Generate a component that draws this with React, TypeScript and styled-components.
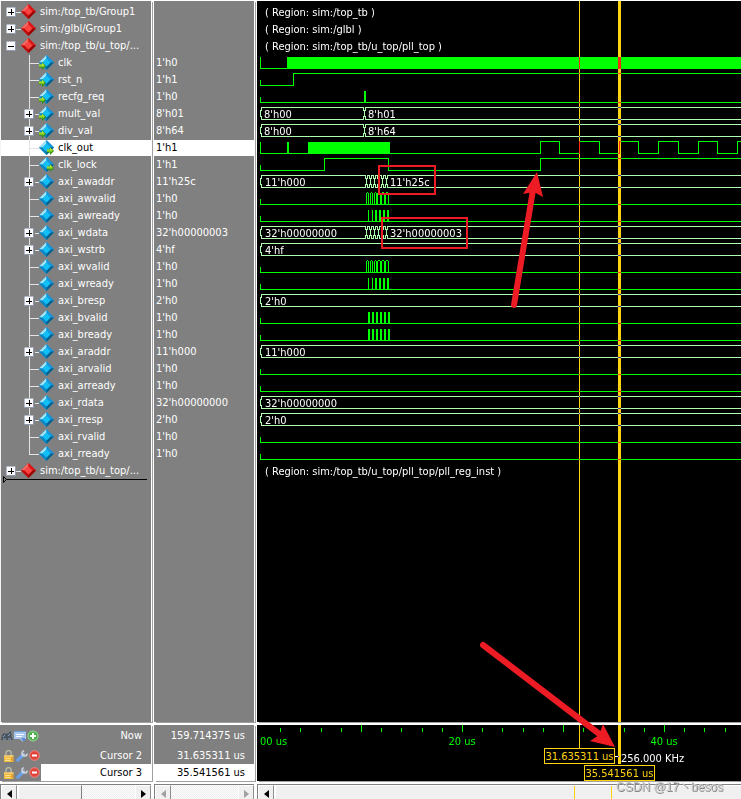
import React from "react";
import styled, { createGlobalStyle, css } from "styled-components";

const GRAY = "#808080";
const GREEN = "#00ff00";
const PALE = "#b0ffb0";
const YELLOW = "#ffd40e";
const RED = "#ed1c24";
const FAR = 4000;
const ROW = 17;

const GlobalStyle = createGlobalStyle`
  *, *::before, *::after { box-sizing: border-box; }
  html, body { margin: 0; padding: 0; background: #fff; }
  body {
    font-family: "DejaVu Sans Condensed", "DejaVu Sans", "Noto Sans", sans-serif;
    font-size: 11px;
    line-height: 17px;
    color: #fff;
  }
  button { font: inherit; color: inherit; border: 0; padding: 0; background: none; }
  svg { display: block; flex: none; }
`;

/* ---------- layout ---------- */

const Window = styled.main`
  position: relative;
  display: grid;
  grid-template-columns: 151px 100px minmax(0, 1fr);
  grid-template-rows: 1fr auto 15px;
  gap: 3px;
  min-height: 100vh;
  padding-top: 1px;
  overflow: hidden;
  background: #fff;
`;

const panelEdge = css`
  box-shadow: 1px 0 0 #fff, 2px 1px 0 #a0a0a0;
`;

const Panel = styled.section<{ $inset?: boolean }>`
  ${panelEdge}
  background: ${GRAY};
  padding-top: 3px;
  border-left: ${(p) => (p.$inset ? "1px solid #f4f4f4" : "0")};
  min-width: 0;
`;

const WavePanel = styled.section`
  ${panelEdge}
  position: relative;
  isolation: isolate;
  background: #000;
  padding-top: 3px;
  min-width: 0;
  overflow: hidden;
`;

const TreeList = styled.ul`
  list-style: none;
  margin: 0;
  padding: 0;
`;

const TreeRow = styled.li<{ $child?: boolean; $selected?: boolean }>`
  display: flex;
  height: ${ROW}px;
  padding-left: ${(p) => (p.$child ? 23 : 5)}px;
  white-space: nowrap;
  background: ${(p) => (p.$selected ? "#fff" : "transparent")};
  color: ${(p) => (p.$selected ? "#000" : "#fff")};
  border-bottom: 1px solid ${(p) => (p.$selected ? GRAY : "transparent")};
`;

const Toggle = styled.button`
  display: block;
  width: 10px;
  height: ${ROW}px;
  flex: none;
`;

const RowName = styled.span`
  line-height: 15px;
  padding-left: 4px;
`;

const ValueRow = styled.li<{ $selected?: boolean }>`
  height: ${ROW}px;
  line-height: 15px;
  padding-left: 2px;
  background: ${(p) => (p.$selected ? "#fff" : "transparent")};
  color: ${(p) => (p.$selected ? "#000" : "#fff")};
  border-bottom: 1px solid ${(p) => (p.$selected ? GRAY : "transparent")};
`;

const DropLine = styled.svg`
  width: 146px;
  height: 8px;
  margin-top: -4px;
`;

const WaveRow = styled.svg`
  width: 100%;
  height: ${ROW}px;
  overflow: hidden;
`;

const CursorLine = styled.span<{ $x: number; $width: number; $height?: string }>`
  position: absolute;
  top: 0;
  left: ${(p) => p.$x}px;
  width: ${(p) => p.$width}px;
  height: ${(p) => p.$height ?? "100%"};
  background: ${YELLOW};
  mix-blend-mode: difference;
`;

/* ---------- cursor strip ---------- */

const Footer = styled.div`
  ${panelEdge}
  background: ${GRAY};
  min-width: 0;
`;

const FooterRow = styled.div<{ $tall?: boolean; $active?: boolean }>`
  display: flex;
  height: ${(p) => (p.$tall ? 22 : 17)}px;
  line-height: ${(p) => (p.$tall ? 22 : 17)}px;
  color: ${(p) => (p.$active ? "#000" : "#fff")};
`;

const IconBar = styled.div<{ $indent: number }>`
  display: flex;
  align-items: center;
  gap: 1px;
  width: 41px;
  padding-left: ${(p) => p.$indent}px;
`;

const IconButton = styled.button`
  display: block;
  flex: none;
  width: 12px;
  height: 12px;
`;

const FooterText = styled.span<{ $active?: boolean }>`
  flex: 1;
  padding-right: 9px;
  text-align: right;
  white-space: nowrap;
  background: ${(p) => (p.$active ? "#fff" : "transparent")};
`;

const Ruler = styled.section`
  ${panelEdge}
  position: relative;
  isolation: isolate;
  background: #000;
  overflow: hidden;
`;

const CursorTag = styled.span<{ $x: number; $y: number }>`
  position: absolute;
  left: ${(p) => p.$x}px;
  top: ${(p) => p.$y}px;
  width: 71px;
  height: 16px;
  line-height: 15px;
  text-align: center;
  white-space: nowrap;
  color: ${YELLOW};
  background: #000;
  border: 1px solid ${YELLOW};
`;

const Frequency = styled.span`
  position: absolute;
  left: 364px;
  top: 25px;
  white-space: nowrap;
`;

/* ---------- scroll bars ---------- */

const ScrollBar = styled.div<{ $bare?: boolean }>`
  display: flex;
  min-width: 0;
  overflow: hidden;
  border-top: 1px solid #808080;
  border-left: 1px solid #808080;
  background: ${(p) =>
    p.$bare ? "#f0f0f0" : "repeating-conic-gradient(#fff 0 25%, #ececec 0 50%) 0 0 / 2px 2px"};
`;

const ScrollButton = styled.button<{ $disabled?: boolean }>`
  display: flex;
  align-items: center;
  justify-content: center;
  flex: none;
  width: 16px;
  height: 17px;
  background: #f0f0f0;
  color: ${(p) => (p.$disabled ? "#a0a0a0" : "#000")};
  border-top: 1px solid #fff;
  border-left: 1px solid #fff;
  border-right: 1px solid #909090;
`;

const Thumb = styled.div<{ $width?: number }>`
  position: relative;
  height: 17px;
  flex: ${(p) => (p.$width ? "none" : "1")};
  width: ${(p) => (p.$width ? `${p.$width}px` : "auto")};
  background: #f0f0f0;
  border-top: 1px solid #fff;
  border-left: 2px solid #fff;
  border-right: ${(p) => (p.$width ? "1px solid #808080" : "0")};
`;

const Spacer = styled.div`
  flex: 1;
`;

const ThumbMark = styled.span<{ $x: number }>`
  position: absolute;
  top: 0;
  bottom: 0;
  left: ${(p) => p.$x}px;
  width: 1px;
  background: ${YELLOW};
`;

/* ---------- overlay ---------- */

const Notes = styled.svg`
  position: absolute;
  inset: 0;
  width: 100%;
  height: 100%;
  pointer-events: none;
`;

const Watermark = styled.span`
  position: absolute;
  right: 18px;
  bottom: 3px;
  font-family: "Liberation Sans", "Noto Sans CJK SC", sans-serif;
  font-size: 12px;
  line-height: 18px;
  color: #c9c9c9;
  text-shadow: 1px 1px 0 #8a8a8a;
  white-space: nowrap;
  pointer-events: none;
`;

/* ---------- data ---------- */

type Dir = "in" | "out" | "none";
type Cell = { at: number; text?: string; textX?: number };
type Wave =
  | { kind: "region"; text: string }
  | { kind: "bit"; tall?: boolean; edges?: number[]; fills?: [number, number][]; extra?: string }
  | { kind: "bus"; cells: Cell[] };
type Signal = {
  name: string;
  value?: string;
  dir?: Dir;
  expand?: "+" | "-";
  selected?: boolean;
  wave: Wave;
};

const flat: Wave = { kind: "bit" };
const bus = (text: string, textX = 8): Wave => ({ kind: "bus", cells: [{ at: 3, text, textX }] });
const burst = (a: string, b: string): Wave => ({
  kind: "bus",
  cells: [
    { at: 3, text: a, textX: 8 },
    ...[109, 113, 117, 121, 125].map((at) => ({ at })),
    { at: 129, text: b, textX: 133 },
  ],
});
const validWave: Wave = {
  kind: "bit",
  fills: [[109, 1], [111, 1], [113, 1], [115, 1], [117, 1], [119, 2], [123, 2], [127, 2], [131, 1]],
  extra: "M110 1.5h1M114 1.5h1M118 1.5h1M121 1.5h2M125 1.5h2M129 1.5h2",
};
const readyWave: Wave = {
  kind: "bit",
  fills: [[111, 1], [115, 1], [118, 2], [122, 2], [126, 2], [130, 2]],
};
const respWave: Wave = {
  kind: "bit",
  fills: [[111, 2], [115, 2], [119, 2], [123, 2], [127, 2], [131, 2]],
};

const signals: Signal[] = [
  { name: "sim:/top_tb/Group1", expand: "+", wave: { kind: "region", text: "( Region: sim:/top_tb )" } },
  { name: "sim:/glbl/Group1", expand: "+", wave: { kind: "region", text: "( Region: sim:/glbl )" } },
  { name: "sim:/top_tb/u_top/...", expand: "-", wave: { kind: "region", text: "( Region: sim:/top_tb/u_top/pll_top )" } },
  { name: "clk", value: "1'h0", dir: "in", wave: { kind: "bit", tall: true, fills: [[30, FAR]] } },
  { name: "rst_n", value: "1'h1", dir: "in", wave: { kind: "bit", edges: [36] } },
  { name: "recfg_req", value: "1'h0", dir: "in", wave: { kind: "bit", fills: [[107, 2]] } },
  { name: "mult_val", value: "8'h01", dir: "in", expand: "+", wave: { kind: "bus", cells: [{ at: 3, text: "8'h00", textX: 7 }, { at: 107, text: "8'h01", textX: 111 }] } },
  { name: "div_val", value: "8'h64", dir: "in", expand: "+", wave: { kind: "bus", cells: [{ at: 3, text: "8'h00", textX: 7 }, { at: 107, text: "8'h64", textX: 111 }] } },
  { name: "clk_out", value: "1'h1", dir: "out", selected: true, wave: { kind: "bit", tall: true, fills: [[30, 2], [51, 82]], edges: [283, 302, 322, 342, 362, 381, 401, 421, 441, 460, 480, 500, 520, 539, 559] } },
  { name: "clk_lock", value: "1'h1", dir: "out", wave: { kind: "bit", edges: [67, 131, 283] } },
  { name: "axi_awaddr", value: "11'h25c", expand: "+", wave: burst("11'h000", "11'h25c") },
  { name: "axi_awvalid", value: "1'h0", wave: validWave },
  { name: "axi_awready", value: "1'h0", wave: readyWave },
  { name: "axi_wdata", value: "32'h00000003", expand: "+", wave: burst("32'h00000000", "32'h00000003") },
  { name: "axi_wstrb", value: "4'hf", expand: "+", wave: bus("4'hf") },
  { name: "axi_wvalid", value: "1'h0", wave: validWave },
  { name: "axi_wready", value: "1'h0", wave: readyWave },
  { name: "axi_bresp", value: "2'h0", expand: "+", wave: bus("2'h0") },
  { name: "axi_bvalid", value: "1'h0", wave: respWave },
  { name: "axi_bready", value: "1'h0", wave: respWave },
  { name: "axi_araddr", value: "11'h000", expand: "+", wave: bus("11'h000") },
  { name: "axi_arvalid", value: "1'h0", wave: flat },
  { name: "axi_arready", value: "1'h0", wave: flat },
  { name: "axi_rdata", value: "32'h00000000", expand: "+", wave: bus("32'h00000000") },
  { name: "axi_rresp", value: "2'h0", expand: "+", wave: bus("2'h0") },
  { name: "axi_rvalid", value: "1'h0", wave: flat },
  { name: "axi_rready", value: "1'h0", wave: flat },
  { name: "sim:/top_tb/u_top/...", expand: "+", wave: { kind: "region", text: "( Region: sim:/top_tb/u_top/pll_top/pll_reg_inst )" } },
];

const lastChild = signals.length - 2;

/* ---------- icons ---------- */

const RedDiamond = () => (
  <svg width="15" height="17" viewBox="0 0 15 17">
    <path d="M7.5 0L15 7.5L7.5 15L0 7.5Z" fill="#d01212" />
    <path d="M7.5 0L0 7.5H3.5L7.5 3.5Z" fill="#f46a62" />
    <path d="M7.5 0L15 7.5H11.5L7.5 3.5Z" fill="#d81818" />
    <path d="M0 7.5L7.5 15V11.5L3.5 7.5Z" fill="#c00c0c" />
    <path d="M15 7.5L7.5 15V11.5L11.5 7.5Z" fill="#960606" />
    <path d="M7.5 3.5L11.5 7.5L7.5 11.5L3.5 7.5Z" fill="#fb4340" />
  </svg>
);

const BlueDiamond = ({ dir }: { dir?: Dir }) => (
  <svg width="15" height="17" viewBox="0 0 15 17">
    <path d="M7.5 0L15 7.5L7.5 15L0 7.5Z" fill="#0a8fd0" />
    <path d="M7.5 0L0 7.5H3.5L7.5 3.5Z" fill="#a4e6fa" />
    <path d="M7.5 0L15 7.5H11.5L7.5 3.5Z" fill="#1696dc" />
    <path d="M0 7.5L7.5 15V11.5L3.5 7.5Z" fill="#0c86c4" />
    <path d="M15 7.5L7.5 15V11.5L11.5 7.5Z" fill="#06608c" />
    <path d="M7.5 3.5L11.5 7.5L7.5 11.5L3.5 7.5Z" fill="#12c0f8" />
    {(dir === "in" || dir === "out") && (
      <g transform={dir === "in" ? "translate(0 7)" : "translate(8 7)"}>
        <path d="M0 2.5H3V0L7 4L3 8V5.5H0Z" fill="#2c8a10" />
        <path d="M0 2.5H3V0.8L6 3.8H0Z" fill="#c4f23c" />
        <path d="M0 3.8H6L3.6 6V4.8H0Z" fill="#7fd41c" />
      </g>
    )}
  </svg>
);

const ToggleIcon = ({ sign }: { sign: "+" | "-" }) => (
  <svg width="10" height="17" viewBox="0 0 10 17">
    <rect x="0.5" y="3.5" width="9" height="9" rx="1" fill="#fbfbfd" stroke="#b4bccb" />
    <path d="M1 12.5h8.5V4" fill="none" stroke="#8f98ac" />
    <path d={sign === "+" ? "M2 8h6M5 5v6" : "M2 8h6"} stroke="#000" shapeRendering="crispEdges" />
  </svg>
);

const Branch = ({ expanded, last }: { expanded?: boolean; last?: boolean }) => (
  <svg width="11" height="17" viewBox="0 0 11 17" shapeRendering="crispEdges">
    <path d={`M5.5 0V${last ? 9 : 17}${expanded ? "" : "M6 8.5H11"}`} fill="none" stroke="#e4e4e4" />
  </svg>
);

const Link = styled.span<{ $w: number }>`
  flex: none;
  width: ${(p) => p.$w}px;
  height: 1px;
  margin-top: 8px;
  background: #e4e4e4;
`;

const Gap = styled.span`
  flex: none;
  width: 5px;
`;

const StackedToggle = styled.span`
  position: relative;
  display: flex;
  flex: none;
  width: 11px;
  height: ${ROW}px;

  ${Toggle} {
    position: absolute;
    left: 0;
    top: 0;
  }
`;

const AddIcon = () => (
  <svg width="12" height="12" viewBox="0 0 12 12">
    <circle cx="6" cy="6" r="5" fill="#4cae4c" stroke="#9bdc98" />
    <path d="M6 3v6M3 6h6" stroke="#fff" strokeWidth="2" />
  </svg>
);
const RemoveIcon = () => (
  <svg width="12" height="12" viewBox="0 0 12 12">
    <circle cx="5.500" cy="5.500" r="4.800" fill="#e2443c" stroke="#f08a80" />
    <path d="M3 5.500h5" stroke="#fff" strokeWidth="2" />
  </svg>
);
const WrenchIcon = () => (
  <svg width="12" height="12" viewBox="0 0 12 12">
    <path d="M1.8 10.2L6.5 5.5" stroke="#6aa0ea" strokeWidth="3.2" strokeLinecap="round" />
    <path d="M6 6L8.5 3.6" stroke="#b8cbe4" strokeWidth="2" />
    <path d="M8.2 0.8A2.6 2.6 0 1 0 11.2 3.6" fill="none" stroke="#c9d2de" strokeWidth="1.6" />
  </svg>
);
const LockIcon = () => (
  <svg width="12" height="12" viewBox="0 0 12 12">
    <path d="M3 5V3.2A2.6 2.6 0 0 1 8.2 3.2V6" fill="none" stroke="#b9b9a8" strokeWidth="1.4" />
    <rect x="1" y="5.5" width="9.5" height="6.5" fill="#f2b83c" />
    <path d="M1 6h9.5M2 8.5h6M2 10.5h6" stroke="#ffe08a" />
    <path d="M9 7v4" stroke="#d88c1a" />
  </svg>
);
const BinocularsIcon = () => (
  <svg width="12" height="12" viewBox="0 0 12 12">
    <path d="M0 10L1 5L3 3L5 4L6 3L7 4L9 1L10 2L11 8L12 10Z" fill="#4a5560" />
    <path d="M2 7L4 5M7 6L9 4M2 9h3M7 9h3" stroke="#8fa2b8" />
  </svg>
);
const NoteIcon = () => (
  <svg width="12" height="12" viewBox="0 0 12 12">
    <path d="M0 1H12V9H9V12L6 9H0Z" fill="#a9c6ee" />
    <path d="M0 1.5H12" stroke="#6f9ddc" />
    <path d="M2 4.5h8M2 6.5h6" stroke="#f4f8ff" />
    <path d="M7 8h4v3H9Z" fill="#5b8bd0" />
  </svg>
);
const ArrowGlyph = ({ right }: { right?: boolean }) => (
  <svg width="5" height="8" viewBox="0 0 5 8">
    <path d={right ? "M0 0L5 4L0 8Z" : "M5 0L0 4L5 8Z"} fill="currentColor" />
  </svg>
);

/* ---------- wave forms ---------- */

function bitPath(edges: number[], fills: [number, number][], tall?: boolean) {
  const endless = fills.find(([, w]) => w === FAR);
  const end = endless ? endless[0] : FAR;
  let d = `M3.5 ${tall ? 2 : 8}V13.5`;
  let high = false;
  edges.forEach((x) => {
    d += high ? `H${x + 0.5}V13.5` : `H${x + 0.5}V1.5`;
    high = !high;
  });
  return `${d}H${end}`;
}

function cellPath(a: number, b: number) {
  const l = a + 0.5;
  const r = b + 0.5;
  return `M${l + 1} 1.5H${r - 1}V4L${r} 5V10L${r - 1} 11V13.5H${l + 1}V11L${l} 10V5L${l + 1} 4Z`;
}

const WaveView = ({ wave, label }: { wave: Wave; label: string }) => (
  <WaveRow role="img" aria-label={label}>
    {wave.kind === "region" && (
      <text x="8" y="12" fill="#fff">
        {wave.text}
      </text>
    )}
    {wave.kind === "bit" && (
      <g shapeRendering="crispEdges">
        <path d={bitPath(wave.edges ?? [], wave.fills ?? [], wave.tall) + (wave.extra ?? "")} fill="none" stroke={GREEN} />
        {(wave.fills ?? []).map(([x, w]) => (
          <rect key={x} x={x} y="2" width={w} height="12" fill={GREEN} />
        ))}
      </g>
    )}
    {wave.kind === "bus" &&
      wave.cells.map((c, i) => (
        <g key={c.at}>
          <path d={cellPath(c.at, wave.cells[i + 1]?.at ?? FAR)} fill="none" stroke={PALE} shapeRendering="crispEdges" />
          {c.text && (
            <text x={c.textX} y="12" fill="#fff">
              {c.text}
            </text>
          )}
        </g>
      ))}
  </WaveRow>
);

const RulerScale = () => {
  const ticks = Array.from({ length: 150 }, (_, i) => i + 1);
  return (
    <Notes aria-hidden="true">
      {ticks.map((i) => (
        <rect
          key={i}
          x={Math.round(3 + 20.2 * i)}
          y={i % 5 ? 3 : 0}
          width="1"
          height={i % 5 ? 4 : 7}
          fill={GREEN}
          shapeRendering="crispEdges"
        />
      ))}
      <text x="3" y="20" fill={GREEN}>00 us</text>
      <text x="205" y="20" fill={GREEN} textAnchor="middle">20 us</text>
      <text x="407" y="20" fill={GREEN} textAnchor="middle">40 us</text>
      <path d="M358 31.5h4" stroke="#fff" shapeRendering="crispEdges" />
    </Notes>
  );
};

const cursorRows = [
  { name: "Cursor 2", value: "31.635311 us", active: false },
  { name: "Cursor 3", value: "35.541561 us", active: true },
];

export default function App() {
  return (
    <>
      <GlobalStyle />
      <Window>
        <Panel $inset aria-label="Signals">
          <TreeList>
            {signals.map((s, i) => {
              const child = s.value !== undefined;
              return (
                <TreeRow key={i} $child={child} $selected={s.selected}>
                  {child ? (
                    <>
                      <StackedToggle>
                        <Branch expanded={!!s.expand} last={i === lastChild} />
                        {s.expand && (
                          <Toggle aria-label={`Expand ${s.name}`}>
                            <ToggleIcon sign={s.expand} />
                          </Toggle>
                        )}
                      </StackedToggle>
                      <Link $w={4} />
                      <BlueDiamond dir={s.dir} />
                    </>
                  ) : (
                    <>
                      <Toggle aria-label={`Toggle ${s.name}`}>
                        <ToggleIcon sign={s.expand ?? "+"} />
                      </Toggle>
                      {s.expand === "+" ? <Link $w={5} /> : <Gap />}
                      <RedDiamond />
                    </>
                  )}
                  <RowName>{s.name}</RowName>
                </TreeRow>
              );
            })}
          </TreeList>
          <DropLine viewBox="0 0 146 8" aria-hidden="true">
            <path d="M2.5 0.5V6.5L5.5 3.5Z" fill="none" stroke="#000" />
            <path d="M5 3.5H146" stroke="#000" shapeRendering="crispEdges" />
          </DropLine>
        </Panel>

        <Panel aria-label="Values">
          <TreeList>
            {signals.map((s, i) => (
              <ValueRow key={i} $selected={s.selected}>
                {s.value}
              </ValueRow>
            ))}
          </TreeList>
        </Panel>

        <WavePanel aria-label="Waves">
          {signals.map((s, i) => (
            <WaveView key={i} wave={s.wave} label={s.name} />
          ))}
          <CursorLine $x={322} $width={1} />
          <CursorLine $x={361} $width={3} />
        </WavePanel>

        <Footer>
          <FooterRow $tall>
            <IconBar $indent={1}>
              <IconButton aria-label="Find"><BinocularsIcon /></IconButton>
              <IconButton aria-label="Edit grid"><NoteIcon /></IconButton>
              <IconButton aria-label="Add cursor"><AddIcon /></IconButton>
            </IconBar>
            <FooterText>Now</FooterText>
          </FooterRow>
          {cursorRows.map((c) => (
            <FooterRow key={c.name} $active={c.active}>
              <IconBar $indent={3}>
                <IconButton aria-label={`Lock ${c.name}`}><LockIcon /></IconButton>
                <IconButton aria-label={`Edit ${c.name}`}><WrenchIcon /></IconButton>
                <IconButton aria-label={`Remove ${c.name}`}><RemoveIcon /></IconButton>
              </IconBar>
              <FooterText $active={c.active}>{c.name}</FooterText>
            </FooterRow>
          ))}
        </Footer>

        <Footer>
          <FooterRow $tall>
            <FooterText>159.714375 us</FooterText>
          </FooterRow>
          {cursorRows.map((c) => (
            <FooterRow key={c.name} $active={c.active}>
              <FooterText $active={c.active}>{c.value}</FooterText>
            </FooterRow>
          ))}
        </Footer>

        <Ruler aria-label="Timeline">
          <RulerScale />
          <CursorLine $x={322} $width={1} $height="23px" />
          <CursorLine $x={361} $width={3} $height="39px" />
          <CursorTag $x={287} $y={23}>31.635311 us</CursorTag>
          <CursorTag $x={327} $y={40}>35.541561 us</CursorTag>
          <Frequency>256.000 KHz</Frequency>
        </Ruler>

        <ScrollBar>
          <ScrollButton aria-label="Scroll names left"><ArrowGlyph /></ScrollButton>
          <Thumb $width={65} />
          <Spacer />
          <ScrollButton aria-label="Scroll names right"><ArrowGlyph right /></ScrollButton>
        </ScrollBar>
        <ScrollBar>
          <ScrollButton $disabled aria-label="Scroll values left"><ArrowGlyph /></ScrollButton>
          <Spacer />
          <ScrollButton $disabled aria-label="Scroll values right"><ArrowGlyph right /></ScrollButton>
        </ScrollBar>
        <ScrollBar $bare>
          <ScrollButton aria-label="Scroll waves left"><ArrowGlyph /></ScrollButton>
          <Thumb>
            <ThumbMark $x={298} />
            <ThumbMark $x={335} />
          </Thumb>
        </ScrollBar>

        <Notes aria-hidden="true">
          <g fill="none" stroke={RED} strokeWidth="2">
            <rect x="379" y="166" width="56" height="28" />
            <rect x="382" y="218" width="85" height="30" />
          </g>
          <path d="M514 305L533 190" stroke={RED} strokeWidth="6" strokeLinecap="round" />
          <path d="M537 172L543 197L534 192L523 194Z" fill={RED} />
          <path d="M483 645L602 736" stroke={RED} strokeWidth="6" strokeLinecap="round" />
          <path d="M615 747L603 724L599 735L590 741Z" fill={RED} />
        </Notes>
        <Watermark>CSDN @17丶besos</Watermark>
      </Window>
    </>
  );
}
